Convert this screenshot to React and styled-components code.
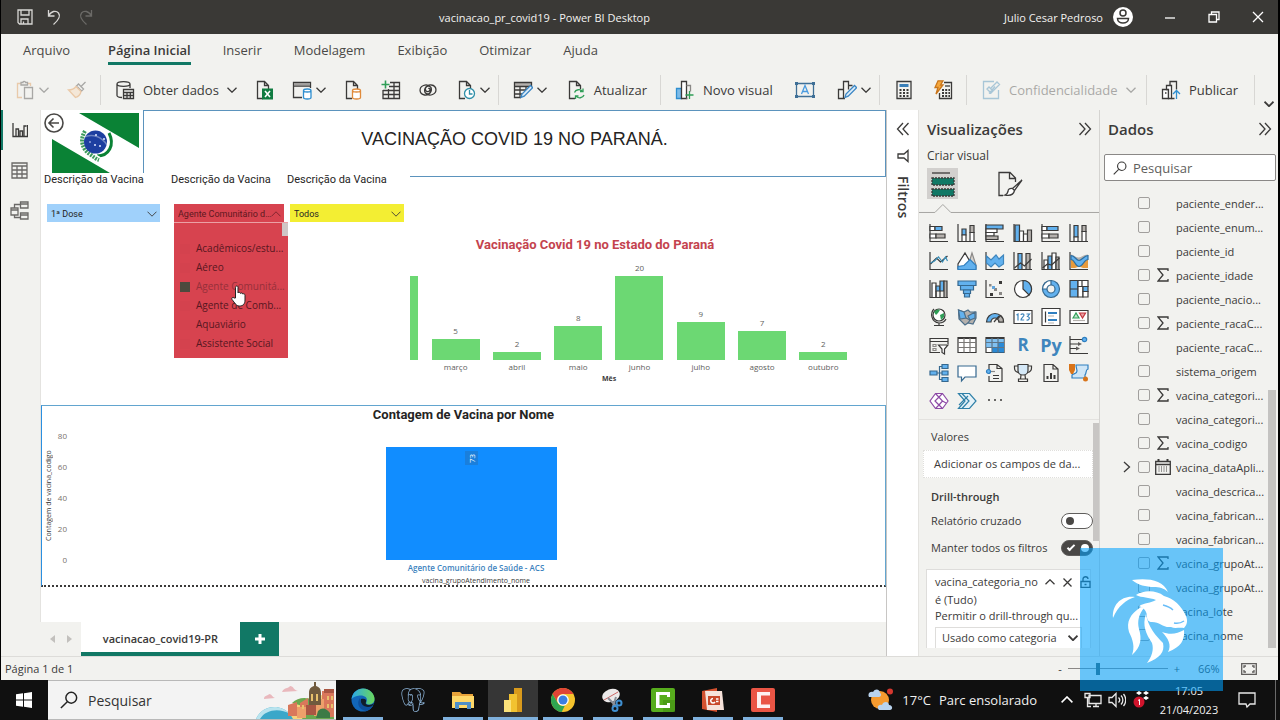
import React from "react";
import styled, { createGlobalStyle, css } from "styled-components";
import { SiPostgresql } from "react-icons/si";

const ui = `"Open Sans", "Noto Sans", sans-serif`;
const din = `Roboto, "Liberation Sans", sans-serif`;
const ink = "#3b3a39";
const green = "#117865";
const blue = "#62b1ee";
const grey = "#b5b1ad";
const pane = "#f2f2ef";

const GlobalStyle = createGlobalStyle`
  *, *::before, *::after { box-sizing: border-box; }
  body { margin: 0; font-family: ${ui}; color: ${ink}; background: #000; }
  button, input, select { font: inherit; color: inherit; }
  button { border: 0; padding: 0; background: none; }
  svg { display: block; flex: none; }
`;

const Shell = styled.div`
  position: relative;
  display: flex;
  flex-direction: column;
  height: 100vh;
  overflow: hidden;
`;

const Window = styled.div`
  flex: 1;
  min-height: 0;
  display: flex;
  flex-direction: column;
  border-left: 1px solid #000;
  border-right: 2px solid #000;
  background: ${pane};
`;

/* ---------- title bar ---------- */
const TitleBar = styled.header`
  height: 34px;
  flex: none;
  display: flex;
  align-items: center;
  background: #3a3936;
  color: #f3f2f1;
  font-size: 11px;
`;
const QuickAccess = styled.div`
  width: 96px;
  padding-left: 15px;
  display: flex;
  gap: 12px;
`;
const WindowTitle = styled.div`
  flex: 1;
  text-align: center;
`;
const Account = styled.div`
  width: 286px;
  padding-right: 6px;
  display: flex;
  align-items: center;
  justify-content: flex-end;
`;
const AccountButton = styled.button`
  display: flex;
  align-items: center;
  gap: 10px;
  margin-right: 15px;
  white-space: nowrap;
`;
const WindowButton = styled.button`
  width: 44px;
  display: flex;
  justify-content: center;
  &:last-child { width: 28px; margin-left: 8px; }
`;

/* ---------- ribbon ---------- */
const MenuTabs = styled.nav`
  height: 36px;
  flex: none;
  display: flex;
  align-items: flex-start;
  gap: 32px;
  padding: 4px 22px 0;
  font-size: 13px;
`;
const MenuTab = styled.button`
  height: 27px;
  line-height: 20px;
  display: block;
  border-bottom: 3px solid transparent;
  color: #4a4947;
  &:first-child { margin-right: 6px; }
  ${(p) => p.$active && css`
    font-weight: 600;
    color: ${ink};
    border-color: ${green};
  `}
`;
const Ribbon = styled.div`
  height: 40px;
  flex: none;
  display: flex;
  align-items: center;
  font-size: 13px;
`;
const RibbonGroup = styled.div`
  width: ${(p) => p.$w}px;
  height: 30px;
  padding: 0 ${(p) => p.$end || 13}px 0 14px;
  display: flex;
  align-items: center;
  justify-content: space-between;
  border-right: 1px solid #d8d7d4;
`;
const Tool = styled.button`
  display: flex;
  align-items: center;
  gap: ${(p) => (p.$label ? 8 : 4)}px;
  white-space: nowrap;
  opacity: ${(p) => (p.disabled ? 0.4 : 1)};
`;
const Expand = styled.button`
  align-self: flex-end;
  margin: 0 4px 3px auto;
`;

/* ---------- workspace ---------- */
const Workspace = styled.main`
  flex: 1;
  min-height: 0;
  display: flex;
`;
const ReportSide = styled.section`
  flex: 1;
  min-width: 0;
  display: flex;
  flex-direction: column;
`;
const ReportRow = styled.div`
  flex: 1;
  min-height: 0;
  display: flex;
`;
const Rail = styled.nav`
  width: 40px;
  display: flex;
  flex-direction: column;
  border-right: 1px solid #e4e3e0;
`;
const RailButton = styled.button`
  height: 40px;
  padding-right: 4px;
  display: flex;
  align-items: center;
  justify-content: center;
  border-left: 2px solid ${(p) => (p.$active ? green : "transparent")};
`;
const Report = styled.div`
  flex: 1;
  min-width: 0;
  display: flex;
  flex-direction: column;
  background: #fff;
`;
const ReportHeader = styled.div`
  height: 67px;
  flex: none;
  display: flex;
`;
const FlagCell = styled.div`
  position: relative;
  width: 102px;
  padding: 3px 0 0 11px;
`;
const BackButton = styled.button`
  position: absolute;
  left: 3px;
  top: 3px;
`;
const ReportTitle = styled.h1`
  flex: 1;
  margin: 0;
  padding-top: 16px;
  border: 1px solid #5b93bd;
  text-align: center;
  font: 400 18px/24px "Liberation Sans", Arial, sans-serif;
  color: #252423;
`;
const ReportMiddle = styled.div`
  height: 228px;
  flex: none;
  display: flex;
`;
const Slicers = styled.div`
  position: relative;
  width: 369px;
  margin-top: -4px;
  padding-left: 3px;
  display: grid;
  grid-template-columns: 127px 116px 123px;
  background: #fff;
`;
const Slicer = styled.div`
  font-family: ${din};
  font-size: 11px;
  color: #252423;
`;
const SlicerLabel = styled.label`
  display: block;
  line-height: 14px;
  margin-bottom: 17px;
`;
const SlicerBox = styled.div`
  position: relative;
  height: 18px;
  margin: 0 ${(p) => p.$gap}px 0 3px;
  background: ${(p) => p.$bg};
  > svg { position: absolute; right: 3px; top: 7px; pointer-events: none; }
`;
const SlicerSelect = styled.select`
  appearance: none;
  width: 100%;
  height: 18px;
  border: 0;
  padding: 2px 12px 0 4px;
  background: none;
  font: 9px ${din};
  color: ${(p) => p.$color || "#252423"};
  text-overflow: ellipsis;
`;
const SlicerMenu = styled.div`
  position: absolute;
  left: 0;
  top: 18px;
  width: 114px;
  padding: 16px 0 5px 6px;
  background: #d7434f;
  border-top: 1px solid #eba0a5;
  font: 10px/19px ${ui};
  color: #58171f;
  z-index: 2;
  &::after {
    content: "";
    position: absolute;
    right: 0;
    top: 0;
    width: 6px;
    height: 13px;
    background: #cfc6c6;
  }
`;
const SlicerOption = styled.label`
  height: 19px;
  display: flex;
  align-items: center;
  gap: 6px;
  white-space: nowrap;
  color: ${(p) => (p.$on ? "#96303a" : "inherit")};
`;
const SlicerCheck = styled.input`
  appearance: none;
  width: 10px;
  height: 10px;
  margin: 0;
  flex: none;
  background: #d4424e;
  &:checked { background: #4c4a3e; }
`;
const Pointer = styled.div`
  position: absolute;
  left: 57px;
  top: 81px;
  z-index: 3;
`;

/* ---------- column chart ---------- */
const ColumnChart = styled.figure`
  flex: 1;
  margin: 0;
  padding-top: 58px;
  font-size: 8px;
  color: #605e5c;
`;
const ChartTitle = styled.figcaption`
  font: 700 13px/${(p) => p.$line}px ${din};
  color: ${(p) => p.$color};
  text-align: center;
  padding-right: ${(p) => p.$shift || 0}px;
`;
const Columns = styled.div`
  height: 119px;
  padding-right: 32px;
  display: flex;
  align-items: flex-end;
`;
const ClippedColumn = styled.div`
  width: 8px;
  height: 84px;
  margin: 0 7px 14px 0;
  background: #6cd873;
`;
const ColumnCell = styled.div`
  flex: 1;
  display: flex;
  flex-direction: column;
  align-items: center;
  line-height: 14px;
`;
const ColumnValue = styled.span`
  line-height: 16px;
`;
const Column = styled.div`
  width: 48px;
  background: #6cd873;
`;
const AxisName = styled.div`
  text-align: center;
  font-weight: ${(p) => (p.$bold ? 700 : 400)};
  font-size: 7px;
  line-height: 10px;
  padding-right: ${(p) => p.$shift || 0}px;
  color: #3b3a39;
`;

/* ---------- bottom chart ---------- */
const BottomChart = styled.figure`
  height: 182px;
  flex: none;
  margin: 0;
  border: 1px solid #62a5cf;
  border-left: 1px solid #2a8fe0;
  border-bottom: 2px dotted #3b3a39;
`;
const Plot = styled.div`
  display: flex;
`;
const YName = styled.div`
  width: 14px;
  height: 144px;
  writing-mode: vertical-rl;
  transform: rotate(180deg);
  text-align: center;
  font-size: 7px;
  line-height: 14px;
`;
const YTicks = styled.div`
  width: 11px;
  height: 140px;
  margin-top: 4px;
  display: flex;
  flex-direction: column;
  justify-content: space-between;
  text-align: right;
  font: 8px/16px ${ui};
  color: #77716d;
`;
const PlotBody = styled.div`
  flex: 1;
  text-align: center;
`;
const PlotArea = styled.div`
  height: 136px;
  padding-right: 9px;
  display: flex;
  justify-content: center;
  align-items: flex-end;
`;
const BigBar = styled.div`
  width: 171px;
  height: 113px;
  padding-top: 4px;
  display: flex;
  justify-content: center;
  align-items: flex-start;
  background: #118dff;
`;
const BarValue = styled.span`
  height: 14px;
  writing-mode: vertical-rl;
  transform: rotate(180deg);
  font-size: 8px;
  line-height: 13px;
  text-align: center;
  background: #1a7fdc;
  color: #fff;
`;
const CategoryName = styled.div`
  font: 600 8px/16px ${ui};
  color: #3c82be;
`;

/* ---------- page tabs + status ---------- */
const PageTabs = styled.div`
  height: 34px;
  flex: none;
  padding-left: 40px;
  display: flex;
`;
const PageArrows = styled.div`
  width: 40px;
  display: flex;
  align-items: center;
  justify-content: space-evenly;
`;
const PageTab = styled.button`
  width: 159px;
  padding-top: 3px;
  background: #fff;
  border-bottom: 4px solid ${green};
  font-size: 11px;
  font-weight: 600;
`;
const AddPage = styled.button`
  width: 39px;
  display: flex;
  align-items: center;
  justify-content: center;
  background: ${green};
`;
const StatusBar = styled.footer`
  height: 24px;
  flex: none;
  padding: 0 21px 0 4px;
  display: flex;
  align-items: center;
  border-top: 1px solid #dddcd9;
  font-size: 11px;
`;
const Zoom = styled.div`
  margin-left: auto;
  display: flex;
  align-items: center;
  gap: 6px;
  b { width: 26px; font-weight: 400; margin: 0 11px 0 12px; }
`;
const ZoomRange = styled.input`
  appearance: none;
  width: 100px;
  height: 12px;
  margin: 0;
  background: linear-gradient(#8a8886, #8a8886) center / 100% 1px no-repeat;
  &::-webkit-slider-thumb {
    appearance: none;
    width: 4px;
    height: 12px;
    background: #3c5a60;
  }
`;

/* ---------- filters pane ---------- */
const FiltersPane = styled.aside`
  width: 33px;
  display: flex;
  flex-direction: column;
  align-items: center;
  gap: 13px;
  padding: 12px 0 0;
  background: #fff;
  border-left: 1px solid #c8c6c4;
  border-right: 1px solid #e4e3e0;
`;
const FiltersTitle = styled.h2`
  margin: 0;
  writing-mode: vertical-rl;
  font: 600 14px/18px ${ui};
`;

/* ---------- visualisations pane ---------- */
const VizPane = styled.aside`
  width: 181px;
  display: flex;
  flex-direction: column;
  border-right: 1px solid #d5d4d1;
`;
const PaneHeader = styled.div`
  height: 38px;
  flex: none;
  padding: 0 ${(p) => p.$pad}px 0 8px;
  display: flex;
  align-items: center;
  justify-content: space-between;
  h2 { margin: 0; font: 600 15px/20px ${ui}; }
`;
const BuildLabel = styled.div`
  padding-left: 8px;
  font-size: 12px;
  line-height: 16px;
`;
const ModeButtons = styled.div`
  padding: 4px 8px 0;
  display: flex;
  gap: 36px;
`;
const ModeButton = styled.button`
  width: 31px;
  height: 31px;
  display: flex;
  align-items: center;
  justify-content: center;
  background: ${(p) => (p.$active ? "#d2d0ce" : "none")};
`;
const Notch = styled.svg`
  width: 100%;
  height: 16px;
`;
const VizGrid = styled.div`
  padding: 4px 0 4px 6px;
  display: grid;
  grid-template-columns: repeat(6, 28px);
  grid-auto-rows: 28px;
`;
const VizButton = styled.button`
  display: flex;
  align-items: center;
  justify-content: center;
`;
const Wells = styled.div`
  position: relative;
  flex: 1;
  min-height: 0;
  margin-bottom: 8px;
  padding: 7px 6px 0 4px;
  overflow: hidden;
  border-top: 1px solid #e3e2df;
  font-size: 11px;
  white-space: nowrap;
  &::after {
    content: "";
    position: absolute;
    right: 0;
    top: 3px;
    width: 6px;
    height: 118px;
    background: #c8c6c4;
  }
`;
const WellName = styled.div`
  padding-left: 8px;
  line-height: 20px;
  font-weight: ${(p) => (p.$bold ? 600 : 400)};
`;
const DropField = styled.div`
  height: 28px;
  margin: 3px 0 9px;
  padding-left: 10px;
  line-height: 26px;
  background: #fff;
  border: 1px dotted #e0dfdc;
`;
const ToggleRow = styled.label`
  height: 27px;
  padding-left: 8px;
  display: flex;
  align-items: center;
  justify-content: space-between;
`;
const Toggle = styled.input`
  appearance: none;
  position: relative;
  width: 32px;
  height: 16px;
  margin: 0;
  flex: none;
  border: 1px solid #605e5c;
  border-radius: 8px;
  background: #fff;
  &::before {
    content: "";
    position: absolute;
    left: 4px;
    top: 3px;
    width: 8px;
    height: 8px;
    border-radius: 50%;
    background: #4a4846;
  }
  &:checked { background: #4a4846; }
  &:checked::before { left: 19px; background: #fff; }
  &:checked::after {
    content: "";
    position: absolute;
    left: 7px;
    top: 2px;
    width: 4px;
    height: 8px;
    border: solid #fff;
    border-width: 0 2px 2px 0;
    rotate: 45deg;
  }
`;
const FilterCard = styled.div`
  height: 96px;
  margin: 8px 2px 0 3px;
  padding: 2px 8px;
  border: 1px solid #dedddb;
  background: #fff;
  line-height: 16px;
`;
const CardHead = styled.div`
  height: 20px;
  display: flex;
  align-items: center;
  gap: 8px;
  > span { width: 102px; }
`;
const CardSelect = styled.div`
  position: relative;
  margin-top: 3px;
  svg { position: absolute; right: 4px; top: 8px; pointer-events: none; }
  select {
    appearance: none;
    width: 100%;
    height: 26px;
    padding: 0 16px 4px 6px;
    border: 1px solid #dedddb;
    background: #fff;
  }
`;

/* ---------- data pane ---------- */
const DataPane = styled.aside`
  position: relative;
  width: 178px;
  display: flex;
  flex-direction: column;
  &::after {
    content: "";
    position: absolute;
    right: 2px;
    bottom: 8px;
    width: 8px;
    height: 258px;
    background: #c4c3c1;
  }
`;
const SearchBox = styled.label`
  height: 27px;
  flex: none;
  margin: 6px 2px 10px 4px;
  padding-left: 8px;
  display: flex;
  align-items: center;
  gap: 6px;
  background: #fff;
  border: 1px solid #8a8886;
  border-radius: 2px;
  input {
    min-width: 0;
    flex: 1;
    border: 0;
    padding: 0;
    background: none;
    font-size: 13px;
    &::placeholder { color: #605e5c; opacity: 1; }
  }
`;
const FieldList = styled.div`
  flex: 1;
  min-height: 0;
  margin-bottom: 8px;
  overflow: hidden;
`;
const Field = styled.label`
  height: 24px;
  display: grid;
  grid-template-columns: 14px 12px 18px 1fr;
  column-gap: 4px;
  padding-left: 20px;
  align-items: center;
  font-size: 11px;
  white-space: nowrap;
  > svg { justify-self: center; }
`;
const FieldCheck = styled.input`
  appearance: none;
  width: 12px;
  height: 12px;
  margin: 0;
  border: 1px solid #a19f9d;
  border-radius: 2px;
`;

/* ---------- taskbar ---------- */
const Taskbar = styled.footer`
  height: 40px;
  flex: none;
  display: flex;
  background: #101010;
  color: #f0f0f0;
`;
const StartButton = styled.button`
  width: 48px;
  display: flex;
  align-items: center;
  justify-content: center;
`;
const TaskSearch = styled.label`
  width: 288px;
  padding-left: 12px;
  display: flex;
  align-items: center;
  gap: 10px;
  background: #f3f3f3;
  border-top: 1px solid #b8b8b8;
  border-bottom: 1px solid #b8b8b8;
  overflow: hidden;
  input {
    width: 158px;
    border: 0;
    padding: 0;
    background: none;
    font-size: 14px;
    &::placeholder { color: #333; opacity: 1; }
  }
`;
const TaskApps = styled.div`
  padding-left: 2px;
  display: flex;
`;
const TaskApp = styled.button`
  width: 50px;
  position: relative;
  display: flex;
  align-items: center;
  justify-content: center;
  background: ${(p) => (p.$active ? "#363636" : "none")};
  &::after {
    content: "";
    position: absolute;
    bottom: 0;
    left: ${(p) => (p.$active ? 0 : 5)}px;
    right: ${(p) => (p.$active ? 0 : 5)}px;
    height: 3px;
    background: ${(p) => (p.$idle ? "none" : "#7fb0dc")};
  }
`;
const Tray = styled.div`
  margin-left: auto;
  padding-right: 4px;
  display: flex;
  align-items: center;
  gap: 6px;
`;
const Weather = styled.button`
  display: flex;
  align-items: center;
  gap: 8px;
  margin-right: 18px;
  font-size: 13px;
  white-space: nowrap;
`;
const HiddenIcons = styled.button`
  margin-right: 5px;
`;
const Clock = styled.div`
  width: 62px;
  margin-right: 12px;
  text-align: center;
  font-size: 11px;
  line-height: 19px;
`;
const Peek = styled.div`
  height: 40px;
  margin-left: 13px;
  border-left: 1px solid #6a6a6a;
`;
const Watermark = styled.div`
  position: absolute;
  right: 57px;
  bottom: 29px;
  width: 143px;
  height: 143px;
  background: rgba(0, 162, 255, 0.57);
  pointer-events: none;
`;

/* ---------- drawings ---------- */
const Icon = ({ w = 20, h, box, children, stroke = ink, sw = 1.3 }) => (
  <svg width={w} height={h || w} viewBox={box || `0 0 ${w} ${h || w}`} fill="none" stroke={stroke} strokeWidth={sw} aria-hidden="true">
    {children}
  </svg>
);
const Chevron = ({ up, w = 10, color = ink, sw = 1.3 }) => (
  <svg width={w} height={w * 0.6} viewBox="0 0 10 6" fill="none" stroke={color} strokeWidth={sw} aria-hidden="true">
    <path d={up ? "M.5 5.3 5 .8l4.500 4.500" : "M.5.7 5 5.200 9.500.7"} />
  </svg>
);
const Double = ({ left }) => (
  <Icon w={14}><path d={left ? "M7 1 1.500 7 7 13M12.500 1 7 7l5.500 6" : "M1.500 1 7 7l-5.500 6M7 1l5.500 6L7 13"} /></Icon>
);
const Page = "M9 18.500H3.500v-17h7l4 4V9M10.500 1.500v4h4";
const Pencil = () => (
  <g stroke="#3a86c4" fill="#dcecf8"><path d="m8 17.500 1-3.500 8.500-8.500 2.200 2.200-8.500 8.500z" /></g>
);
const ribbon = {
  paste: <Icon><path stroke="#dd8f45" d="M7 17.500H2.500v-14H6M12 3.500h3.500V6" /><path d="M6 5V2.500h2c0-1.600 2.500-1.600 2.500 0h2V5zM9.500 7.500h8v11h-8z" /></Icon>,
  brush: <Icon><path d="m18.500 2-5 5M9.500 6l5 5 2-2-5-5z" /><path stroke="#e08b3b" fill="#f7d9b4" d="M9 6.500C7 9 4.500 10 1.500 10l7 7.500c3-1 5-3.500 5.500-6z" /></Icon>,
  db: <Icon><path d="M7 17.500c-3 0-5-1-5-2V4c0-1.300 3-2.300 6.500-2.300S15 2.700 15 4v4M2 4c0 1.300 3 2.300 6.500 2.300S15 5.300 15 4" /><path d="M8.500 9.500h10v9h-10zM8.500 12.500h10M8.500 15.500h10M12 12.500v6M15.300 12.500v6" /></Icon>,
  excel: <Icon><path d={Page} /><rect x="8" y="8.500" width="11" height="11" fill="#107c41" stroke="none" /><path stroke="#fff" strokeWidth="1.600" d="m11 11 5 6M16 11l-5 6" /></Icon>,
  dataset: <Icon><path d="M10 17.500H1.500v-15h17V8M1.500 6h17" /><path stroke="none" fill="#a19f9d" d="M2 3h16v2.500H2z" /><path stroke="#2f8fd0" fill="#fff" d="M11.500 10.500v7c0 2 7.500 2 7.500 0v-7c0-2-7.500-2-7.500 0s7.500 2 7.500 0" /></Icon>,
  sql: <Icon><path d={Page} /><path stroke="#e08b3b" fill="#fff" d="M9.500 10.500v7c0 2 8 2 8 0v-7c0-2-8-2-8 0s8 2 8 0" /></Icon>,
  enter: <Icon><path d="M9 2.500h9.500v16H2V10M2 10.500h16.500M8 6.500h10.500M2 14.500h16.500M7.500 9v9.500M13 2.500v16" /><path stroke="#2f9e57" strokeWidth="1.600" d="M4.500.5v8M.5 4.500h8" /></Icon>,
  verse: <Icon><path d="M13 7.500c-2.500-3-6.500-.5-5.500 2.500.8 2.500 4.500 2 4.500-.5 0-1-1-1.500-1.800-1M7 12.500c2.500 3 6.500.5 5.500-2.500M13 7.500c1.500 4-2 8.500-6.500 7.500C1 14 .5 7.500 5.500 5.500 8 4.500 11 5 13 7.500zM7 12.500C5.500 8.500 9 4 13.500 5c5.500 1 6 7.500 1 9.500-2.500 1-5.500.5-7.500-2" /></Icon>,
  recent: <Icon><path d={Page} /><circle cx="13.500" cy="13.500" r="5" stroke="#2f8fa8" fill="#fff" /><path stroke="#2f8fa8" d="M13.500 10v4h3" /></Icon>,
  transform: <Icon><path stroke="none" fill="#b5b1ad" d="M1.500 2.500h17V6h-17z" /><path d="M8 17.500H1.500v-15h17V7M1.500 6.500h17M1.500 10h12M1.500 14H9M7 6.500v11M13 6.500V10" /><Pencil /></Icon>,
  refresh: <Icon><path d={Page} /><path stroke="#2f9e57" d="M8.500 12.500c1-3 6-4 8-1M17 8.500v3h-3M18 15c-1 3-6 4-8 1M9.500 19v-3h3" /></Icon>,
  visual: <Icon><path stroke="#2f8fd0" fill="#7dbbe8" d="M1.500 8.500h5v10h-5z" /><path fill="#fff" d="M6.500 1.500h5v17h-5z" /><path stroke="#8a8886" d="M11.500 5.500h4v6M11.500 18.500h1" /><path stroke="#2f9e57" d="M14.500 11v8M10.500 15h8" /></Icon>,
  textbox: <Icon><path stroke="#3f6f96" d="M1.500 3.500h17v13h-17z" /><path stroke="none" fill="#3f6f96" d="M0 2h3v3H0zM17 2h3v3h-3zM0 15h3v3H0zM17 15h3v3h-3z" /><path stroke="#4a9be0" d="m6.500 14 3.500-8.500 3.500 8.500M7.800 11.500h4.500" /></Icon>,
  edit: <Icon><path d="M8 18.500H1.500v-9h5v9M6.500 10V1.500h5v8M11.500 5.500h4" /><Pencil /></Icon>,
  calc: <Icon><path d="M3 1.500h14v17H3z" /><path stroke="none" fill="#3a7fb8" d="M5.500 4h9v3h-9z" /><path strokeDasharray="2 1.500" strokeWidth="2" d="M5.500 10h9.500M5.500 13h9.500M5.500 16h9.500" /></Icon>,
  quick: <Icon><path d="M11 2.500h7.500v16h-12V13" /><path strokeDasharray="2 1.200" strokeWidth="2" d="M9 10h8M9 13h8M9 16h8" /><path d="M12 6h5" /><path stroke="#c9761c" fill="#f6a83c" d="M5 .8h5L7.500 5H10l-7 9 2-6.500H2z" /></Icon>,
  sens: <Icon><path stroke="#3b86b5" d="M13 18.500H2.500v-17H13M17.500 10v8.500H13" /><path stroke="#3b86b5" d="m6 9 4 4 2-2-4-4zM10 8l6-6 2.500 2.500-6 6M8 13.500l6-7" /></Icon>,
  publish: <Icon><path fill="#fff" d="M1.500 9.500h6v9h-6z" /><path fill="#fff" d="M7.500 18.500V9.500h-2v-4h5v13z" /><path d="M9 5.500v-4h6.500v8M10.500 18.500h3M4 13h1.500" /><path stroke="#2f8fd0" d="M15.500 19v-8M12 14l3.500-3.500L19 14" /></Icon>,
};

const axis = <path d="M1 1v17.500h18" />;
const B = ({ d, f = blue }) => <path d={d} fill={f} />;
const viz = [
  <>{axis}<B d="M1 3.500h5v4H1z" f="#fff" /><B d="M6 3.500h7v4H6z" /><B d="M1 11h6v4H1z" f="#fff" /><B d="M7 11h9v4H7z" f={grey} /></>,
  <>{axis}<B d="M5 6h4v6H5z" /><B d="M5 12h4v6.500H5z" f="#fff" /><B d="M13 2.500h4v7h-4z" f={grey} /><B d="M13 9.500h4v9h-4z" f="#fff" /></>,
  <>{axis}<B d="M1 2h17v4H1z" /><B d="M1 6h11v3.500H1z" f="#fff" /><B d="M1 9.500h8V13H1z" f="#fff" /><B d="M1 13h12v3.500H1z" f={grey} /></>,
  <>{axis}<B d="M2 2h4.500v16.500H2z" /><B d="M6.500 8h4v10.500h-4z" f="#fff" /><B d="M10.500 11h4v7.500h-4z" f="#fff" /><B d="M14.500 7h4v11.500h-4z" f={grey} /></>,
  <>{axis}<B d="M1 3.500h5v4H1z" f="#fff" /><B d="M6 3.500h11v4H6z" /><B d="M1 11h7v4H1z" f="#fff" /><B d="M8 11h9v4H8z" f={grey} /></>,
  <>{axis}<B d="M5 2.500h4V14H5z" /><B d="M5 14h4v4.500H5z" f="#fff" /><B d="M13 2.500h4v6h-4z" f={grey} /><B d="M13 8.500h4v10h-4z" f="#fff" /></>,
  <>{axis}<path d="m1.500 13 6-6 4 4 7-6" /><path stroke="#3a8fb8" d="m1.500 12 4-2 4-4 4 5 3-5 2 4" /></>,
  <><path stroke="#8a8886" fill="#d4d1cd" d="M10 18 15 2l4 12v4z" /><B d="M1 18v-5L8 2l7 12v4z" f="#fff" /><path stroke="#2f7fc0" fill={blue} d="M1 18.500v-3l6-1 6-6 6 6v4z" /></>,
  <>{axis}<path d="M1.500 5 6 9l5-5 3 4 4.500-4v9L14 16l-4-4-4 4-4.500-4z" stroke="#3f86bd" fill={blue} /></>,
  <>{axis}<B d="M5 2.500h4v16H5z" /><B d="M13 2.500h4v16h-4z" f={grey} /><path d="m1.500 17 6-5 4 3 7-7" /></>,
  <>{axis}<B d="M3 9h4v9.500H3z" f="#fff" /><B d="M7 5h4v13.500H7z" /><B d="M11 2h4v16.500h-4z" f="#fff" /><B d="M15 6h3v12.500h-3z" f={grey} /><path d="m1.500 17 5-4 4 1 8-7" /></>,
  <>{axis}<path stroke="none" fill={grey} d="M2 3.500c3 0 4 3 7.500 3S14 3.500 19 3.500V8l-9 4-8-4z" /><path stroke="none" fill="#e79a3c" d="M2 9h17v8h-5l-4-1.500L6 17H2z" /><path stroke="#2a6ea3" fill={blue} d="M2 4.500c4 0 5 5 8 5s5-5 9-5v4c-4 0-5 7-9 7s-4-7-8-7z" /></>,
  <>{axis}<B d="M3 4h4v14.500H3z" f="#fff" /><B d="M7 7h4v5H7z" /><B d="M11 2h4v10h-4z" /><B d="M15 2h3v16.500h-3z" f={grey} /><path d="M7 12v6.500M11 12v6.500" /></>,
  <g stroke="#35688f"><B d="M1 2h18v4.500H1z" /><B d="M3.500 6.500h13V11h-13z" /><B d="M6.500 11h7v3.500h-7z" /><B d="M7.500 14.500h5V18h-5z" /></g>,
  <>{axis}<g stroke="none"><path fill={ink} d="M14 2h3v3h-3zM5 14h3v3H5z" /><path fill="#8a8886" d="M9 9h3v3H9zM4 5h2.500v2.500H4zM14 13h3v3h-3z" /><path fill="#62a5dc" d="M7 7h3v3H7z" /></g></>,
  <><circle cx="10" cy="10" r="8.500" fill="#fff" /><B d="M10 10V1.500A8.500 8.500 0 0 1 16 16z" /></>,
  <g stroke="#35688f"><circle cx="10" cy="10" r="8.500" fill={blue} /><path fill="#fff" d="M1.500 10A8.500 8.500 0 0 1 10 1.500V10z" /><circle cx="10" cy="10" r="4" fill={pane} /></g>,
  <><B d="M1 1.500h8V18H1z" /><B d="M9 1.500h10v6H9z" f="#fff" /><B d="M9 7.500h5V18H9z" f="#fff" /><B d="M14 7.500h5v5h-5z" /><B d="M14 12.500h5V18h-5z" f="#fff" /><path d="M1 10h8M13 1.500v6" /></>,
  <><circle cx="10" cy="8" r="6" fill="#fff" /><path stroke="none" fill="#2f9e57" d="M5 5c2-3 5-3 6-2l-2 3-2 2zM11 8l4-2v4l-3 3z" /><path d="M5 2C1 6 2 15 10 16c4 0 6-2 7-4M10 16v2.500M5 18.500h10" /></>,
  <g stroke="#4d6f8a"><B d="M1.500 3 7 5l4-2 2 2h6v6l-3 6-5-1-3 2-6-6z" f={grey} /><B d="M1.500 3 7 5l2 6-6 1zM11 9l7-4v6l-5 2z" /><path d="m9 11 4 2-2 3" /></g>,
  <><B d="M1.500 15a8.500 8.500 0 0 1 17 0H14a4 4 0 0 0-8 0z" /><path fill={grey} d="M18.500 15a8 8 0 0 0-3-6.500L12.500 12c1 .8 1.500 2 1.500 3z" /><path d="m9 15 5-6" /></>,
  <><B d="M1 3.500h18v13H1z" f="#fff" /><path stroke="#3f86bd" d="m3.500 8 1.500-1v6.500M8 8c0-1.500 3-1.500 3 0s-3 3-3 5h3.200M13.500 7h3l-2 2.500c3 .5 2 4-1 3.500" /></>,
  <><B d="M1 1.500h18v17H1z" f="#fff" /><path d="M4.500 4.500v11" /><path stroke="#2f7fc0" strokeWidth="2" d="M7 6h9M7 13h9" /><path stroke={grey} d="M7 9h6M7 16h6" /></>,
  <><B d="M1 3.500h18v13H1z" f="#fff" /><path stroke="#2f9e57" fill="#bfe3cc" d="m4 11 3-5 3 5z" /><path stroke="#c4373f" fill="#e9a0a4" d="m10.500 6 3 5 3-5z" /><path stroke={grey} d="M4 13.500h12" /></>,
  <><path d="M11 17.500H1v-14h18V9M1 6.500h18" /><path stroke="#8a8886" d="M4 9.500h3v2H4zM4 13.500h3v2H4z" /><B d="M9.500 10h9.500l-3.500 4v5l-2.500-1.500V14z" f="#fff" /></>,
  <><B d="M1 2.500h18v15H1z" f="#fff" /><path strokeWidth="2" d="M1 3h18" /><path stroke="#7a7876" d="M1 7.500h18M1 12.500h18M7 3v14.500M13 3v14.500" /></>,
  <><B d="M1 2.500h18v15H1z" f="#fff" /><path stroke="none" fill="#2a8ad6" d="M13 7.500h6v10H7v-5h6z" /><path stroke="none" fill={blue} d="M1 3h18v4.500h-6v5H1z" opacity=".8" /><path strokeWidth="2" d="M1 3h18" /><path stroke="#5d7588" d="M1 7.500h18M1 12.500h18M7 3v14.500M13 3v14.500" /></>,
  null,
  null,
  <>{axis}<path d="M1 4.500h12M1 9h9M1 13.500h6" /><circle cx="15.500" cy="4.500" r="2.200" stroke="#2f7fc0" fill={blue} /><path stroke="none" fill="#605e5c" d="M9 7l4 2-4 2zM7 11.500l4 2-4 2z" /></>,
  <g stroke="#35688f"><B d="M1 8h7v4H1z" /><B d="M13 1.500h6v4h-6zM13 8h6v4h-6zM13 14.500h6v4h-6z" /><path d="M8 10h5M10.500 10V3.500H13M10.500 10v6.500H13" /></g>,
  <path stroke="#35688f" fill="#fff" d="M1 3h18v11H8l-3.500 4v-4H1z" />,
  <><path d="M4 9V1.500h8l5 4v13H4V13M12 1.500v4h5M8 12.500h6M8 15.500h6" /><circle cx="3.500" cy="8.500" r="2" stroke="#2f7fc0" fill={blue} /><path d="M6 8.500h4" stroke="#8a8886" /></>,
  <><B d="M5 1.500h10v6c0 6-10 6-10 0z" f="#d5e9f8" /><path d="M5 3H1.500v2C1.500 8 3 9 5.500 9.500M15 3h3.500v2c0 3-1.500 4-4 4.500M8 12l-.5 4M12 12l.5 4M5.500 18.500v-2.500h9v2.500z" /></>,
  <><path d="M3 1.500h9l5 4.500v12.500H3zM12 1.500V6h5" /><path strokeWidth="2" d="M6.500 16v-3M10 16v-6M13.500 16v-4" /></>,
  <><path stroke="#2f7fc0" fill="#cfe6f7" d="M7 2h12v4c-3 1-1 4-3 6v3H3v-3c2-2 5-1 5-4 0-2-1-3-1-6z" /><path stroke="none" fill="#d8741a" d="M0 1h6v6l-2 4H2L0 7zM14 16a2.500 2.500 0 1 0 5 0 2.500 2.500 0 1 0-5 0" /></>,
  <g stroke="#8d4aa6"><path fill="#fff" d="M6.500 2.500h7L19 10l-5.500 7.500h-7L1 10z" /><path d="m6.500 2.500 7 7.500-3.500 4-4-4 7.500-7.500M10 14l3.500 3.500M10 14l-3.500 3.500M13.500 10 17 12" /></g>,
  <g stroke="#2f80a8"><path fill="#e6f2f8" d="M1.500 2.500h11L19 10l-6.500 7.500h-11L8 10z" /><path d="m5 2.500 7 7.500-7 7.500M2 14l9-9" /></g>,
];
const VizText = styled.span`
  font: 700 ${(p) => p.$size}px/20px ${ui};
  color: #3f86bd;
`;
const scripts = { 27: ["R", 17], 28: ["Py", 18] };

const menu = ["Arquivo", "Página Inicial", "Inserir", "Modelagem", "Exibição", "Otimizar", "Ajuda"];
const options = ["Acadêmicos/estu...", "Aéreo", "Agente Comunitá...", "Agente de Comb...", "Aquaviário", "Assistente Social"];
const months = [["março", 5], ["abril", 2], ["maio", 8], ["junho", 20], ["julho", 9], ["agosto", 7], ["outubro", 2]];
const fields = [
  ["paciente_ender..."], ["paciente_enum..."], ["paciente_id"], ["paciente_idade", "sum"], ["paciente_nacio..."],
  ["paciente_racaC...", "sum"], ["paciente_racaC..."], ["sistema_origem"], ["vacina_categori...", "sum"],
  ["vacina_categori..."], ["vacina_codigo", "sum"], ["vacina_dataApli...", "date"], ["vacina_descrica..."],
  ["vacina_fabrican..."], ["vacina_fabrican..."], ["vacina_grupoAt...", "sum"], ["vacina_grupoAt..."],
  ["vacina_lote"], ["vacina_nome"],
];

const Sigma = () => <Icon w={12} h={14}><path d="M11 3V1H1l5 6-5 6h10v-2" /></Icon>;
const Calendar = () => (
  <Icon w={16}><path d="M.7 2.500h14.600v12.800H.7zM.7 5.500h14.600" /><path strokeWidth="2" d="M3.500 0v3M12.500 0v3" /><path strokeDasharray="1 1" strokeWidth="1" d="M4 7.500v6M6.500 7.500v6M9 7.500v6M11.500 7.500v6" /></Icon>
);
const Magnifier = ({ w, color }) => (
  <Icon w={w} box="0 0 16 16" stroke={color}><circle cx="10" cy="6" r="4.800" /><path d="M6.500 9.500.8 15.200" /></Icon>
);

function Flag() {
  return (
    <svg width="87" height="60" viewBox="0 0 87 60" aria-hidden="true">
      <path fill="#fff" d="M0 0h87v60H0z" />
      <path fill="#0a8235" d="M27 0h60v35zM0 26v34h58z" />
      <path fill="none" stroke="#0a8235" strokeWidth="3" d="M57 20c6 12 0 23-12 23" />
      <path fill="none" stroke="#fff" strokeWidth="7" d="M33 18c-5 8-4 18 6 24 3 2 5 4 8 5" />
      <path fill="none" stroke="#3c9a5c" strokeWidth="4" strokeDasharray="2 1" d="M33 18c-5 8-4 18 6 24 3 2 5 4 8 5" />
      <circle cx="43.500" cy="29" r="11.500" fill="#1d3fa0" />
      <path fill="none" stroke="#fff" strokeWidth="1.500" d="M32 24c9-4 18 0 23 8" opacity=".35" />
      <g fill="#dfe8ff"><circle cx="44" cy="22" r="1" /><circle cx="52" cy="26" r="1" /><circle cx="43" cy="32" r="1" /><circle cx="48" cy="33" r="1" /><circle cx="38" cy="29" r=".8" /></g>
    </svg>
  );
}

function City() {
  return (
    <svg width="78" height="38" viewBox="0 0 78 38" aria-hidden="true">
      <path fill="#e9b8bd" d="M8 18c0-4 4-3 5-5 3 0 3 3 6 4zM26 11c2-5 6-3 8-6 4 0 3 4 8 5z" />
      <path fill="#f6d37c" d="M28 38c4-14 20-22 50-26v26z" />
      <path fill="#6aa84f" d="M36 22c6-6 14-6 22-3l-4 8zM50 30h28v8H46z" />
      <path fill="#3aa7c9" d="M0 38c6-14 24-16 34-5l3 5z" />
      <path fill="#b8e3ee" d="M0 38c6-14 24-16 34-5-10-6-24-5-30 5z" />
      <path fill="#d9775b" d="M32 24l9-3v14h-9zM44 22l8-5v16h-8zM66 10h12v26H66z" />
      <path fill="#eda06a" d="M41 26h9v11h-9zM58 18h10v17H58z" />
      <path fill="#a95643" d="M68 8h10v4H68zM50 24h10v10H50z" />
      <path fill="#705a3e" d="M53 12c0-5 3-7 6-7s6 2 6 7v12H53zM58 1h2v5h-2z" />
      <path fill="#e8c16c" d="M55 13h2v7h-2zM60 13h2v7h-2zM71 15h2v4h-2zM75 15h2v4h-2zM71 23h2v4h-2zM75 23h2v4h-2zM46 24h2v4h-2z" />
      <path fill="#3c7a46" d="M62 30c4-4 8-3 12 2v5H60z" />
    </svg>
  );
}

const apps = [
  { name: "Edge", icon: (
    <svg width="24" height="24" viewBox="0 0 24 24"><defs><linearGradient id="eg" x1="0" x2="1"><stop offset="0" stopColor="#2aa7e8" /><stop offset="1" stopColor="#6bd85a" /></linearGradient></defs>
      <circle cx="12" cy="12" r="11.500" fill="#1266b8" /><path fill="url(#eg)" d="M.6 11C1.500 4 7 .5 12 .5 19 .5 23.500 6 23.500 11c0 4-3 5.500-6 5.500-2 0-3-1-2-2.500 2-5-3-7-7-6.500C5 8 2 9 .6 11z" /><path fill="#0d4f9c" d="M9 10c-4 5-1 12 6 13 3-1 5-2.500 7-5-6 2.500-13 0-13-8z" /><path fill="#101010" d="M15 14c-1 1.500 0 3 3 3 2 0 4-1 5-2-1 3-3 4-6 4-5 0-8-4-7-8 3-1 6 0 5 3z" opacity=".85" /></svg>) },
  { name: "PostgreSQL", idle: true, icon: <SiPostgresql size={24} color="#8db4d8" /> },
  { name: "Explorador", icon: (
    <svg width="22" height="20" viewBox="0 0 22 20"><path fill="#e8a33a" d="M0 2h8l2 2h11v4H0z" /><path fill="#ffd869" d="M0 6h22v12H0z" /><path fill="#4f8fc8" d="M3 19v-7h16v7h-4v-4H7v4z" /></svg>) },
  { name: "Power BI", active: true, icon: (
    <svg width="18" height="24" viewBox="0 0 18 24"><path fill="#d99a1c" d="M10 0h8v24h-8z" /><path fill="#f2c230" d="M5 6h8v18H5z" /><path fill="#fbe27a" d="M0 12h7v12H0z" /></svg>) },
  { name: "Chrome", icon: (
    <svg width="24" height="24" viewBox="0 0 24 24"><circle cx="12" cy="12" r="12" fill="#f5c32c" /><path fill="#e04335" d="M1.600 6A12 12 0 0 1 22.400 6H12a6 6 0 0 0-5.200 9z" /><path fill="#2fa450" d="M1.600 6 6.800 15A6 6 0 0 0 12 18h1.700l-3 6A12 12 0 0 1 1.600 6z" /><circle cx="12" cy="12" r="5.800" fill="#fff" /><circle cx="12" cy="12" r="4.500" fill="#3b7de0" /></svg>) },
  { name: "Captura", icon: (
    <svg width="26" height="24" viewBox="0 0 26 24"><ellipse cx="11" cy="7.500" rx="9" ry="6.500" fill="#eceaea" transform="rotate(-20 11 7.500)" /><path stroke="#c66" d="m4 12 14-8" /><path stroke="#8a9099" strokeWidth="2" d="m8 10 8 8M16 9l-3 9" /><g fill="none" stroke="#3f8fd0" strokeWidth="2"><circle cx="15" cy="20.500" r="2.500" /><circle cx="19" cy="15" r="2.500" /></g></svg>) },
  { name: "Camtasia", icon: (
    <svg width="24" height="24" viewBox="0 0 24 24"><rect width="24" height="24" rx="2" fill="#57ad1d" /><path fill="#3f8a12" d="M12 12h12v12H12z" opacity=".5" /><path fill="#fff" d="M5 4h14v5h-3V7H8.500v10H16v-2h3v5H5z" /></svg>) },
  { name: "PowerPoint", icon: (
    <svg width="24" height="24" viewBox="0 0 24 24"><path fill="#d3512f" d="m1 3 15-3v24L1 21z" /><path fill="#f6e2da" d="M4 3h17l2 19H6z" /><path fill="#c8482a" d="M7 8h12v9H7z" /><path fill="none" stroke="#fff" strokeWidth="1.500" d="M12 10.500a2.300 2.300 0 1 0 2 3.500M15 11h2.500M15 13.500h2.500" /></svg>) },
  { name: "Gravador", icon: (
    <svg width="24" height="24" viewBox="0 0 24 24"><rect width="24" height="24" rx="2" fill="#ea5545" /><path fill="#fff" d="M6 4h13v3.500h-9v9h9V20H6z" opacity=".92" /></svg>) },
];

export default function App() {
  return (
    <Shell>
      <GlobalStyle />
      <Window>
        <TitleBar>
          <QuickAccess>
            <button aria-label="Salvar"><Icon w={18} stroke="#d8d7d5"><path d="M2 2h14v14H3.500L2 14.500zM5 2v5h8V2M5 16v-5h7v5M7.500 13.500V16" /></Icon></button>
            <button aria-label="Desfazer"><Icon w={18} stroke="#d8d7d5"><path d="M2.500 2v6h6M2.500 8C5 3 10 2 12.500 5c3 4-1 8-5 11.500" /></Icon></button>
            <button aria-label="Refazer"><Icon w={18} stroke="#6b6a67"><path d="M15.500 2v6h-6M15.500 8C13 3 8 2 5.500 5c-3 4 1 8 5 11.500" /></Icon></button>
          </QuickAccess>
          <WindowTitle>vacinacao_pr_covid19 - Power BI Desktop</WindowTitle>
          <Account>
            <AccountButton>
              Julio Cesar Pedroso
              <Icon w={20} stroke="#3a3936" sw={1.5}><circle cx="10" cy="10" r="10" fill="#fff" stroke="none" /><circle cx="10" cy="6" r="3" /><path d="M4.500 11.500h11c0 6-11 6-11 0z" /></Icon>
            </AccountButton>
            <WindowButton aria-label="Minimizar"><Icon w={12} stroke="#fff"><path d="M1 7h10" /></Icon></WindowButton>
            <WindowButton aria-label="Restaurar"><Icon w={12} stroke="#fff"><path d="M1 3.500h7.500V11H1zM3.500 3.500v-2.500H11v7.500H8.500" /></Icon></WindowButton>
            <WindowButton aria-label="Fechar"><Icon w={12} stroke="#fff"><path d="m1 1 10 10M11 1 1 11" /></Icon></WindowButton>
          </Account>
        </TitleBar>
        <MenuTabs>
          {menu.map((m, i) => <MenuTab key={m} $active={i === 1}>{m}</MenuTab>)}
        </MenuTabs>
        <Ribbon>
          <RibbonGroup $w={100}>
            <Tool disabled aria-label="Colar">{ribbon.paste}<Chevron /></Tool>
            <Tool disabled aria-label="Pincel">{ribbon.brush}</Tool>
          </RibbonGroup>
          <RibbonGroup $w={398} $end={8}>
            <Tool $label>{ribbon.db}Obter dados<Chevron /></Tool>
            <Tool aria-label="Excel">{ribbon.excel}</Tool>
            <Tool aria-label="Hub de dados">{ribbon.dataset}<Chevron /></Tool>
            <Tool aria-label="SQL Server">{ribbon.sql}</Tool>
            <Tool aria-label="Inserir dados">{ribbon.enter}</Tool>
            <Tool aria-label="Dataverse">{ribbon.verse}</Tool>
            <Tool aria-label="Fontes recentes">{ribbon.recent}<Chevron /></Tool>
          </RibbonGroup>
          <RibbonGroup $w={162}>
            <Tool aria-label="Transformar dados">{ribbon.transform}<Chevron /></Tool>
            <Tool $label>{ribbon.refresh}Atualizar</Tool>
          </RibbonGroup>
          <RibbonGroup $w={219} $end={8}>
            <Tool $label>{ribbon.visual}Novo visual</Tool>
            <Tool aria-label="Caixa de texto">{ribbon.textbox}</Tool>
            <Tool aria-label="Mais visuais">{ribbon.edit}<Chevron /></Tool>
          </RibbonGroup>
          <RibbonGroup $w={87}>
            <Tool aria-label="Nova medida">{ribbon.calc}</Tool>
            <Tool aria-label="Medida rápida">{ribbon.quick}</Tool>
          </RibbonGroup>
          <RibbonGroup $w={180} $end={8}>
            <Tool disabled $label>{ribbon.sens}Confidencialidade<Chevron /></Tool>
          </RibbonGroup>
          <RibbonGroup $w={108}>
            <Tool $label>{ribbon.publish}Publicar</Tool>
          </RibbonGroup>
          <Expand aria-label="Expandir"><Chevron sw={1.8} /></Expand>
        </Ribbon>

        <Workspace>
          <ReportSide>
            <ReportRow>
              <Rail>
                <RailButton $active aria-label="Relatório"><Icon w={16}><path d="M1 1v13.500h14.500V3M4 14V7h2.500v7M8 14V9h2.500v5M12 14V4h2.500" /></Icon></RailButton>
                <RailButton aria-label="Dados"><Icon w={17} stroke="#6b6967"><path d="M1 1h15v15H1zM1 4h15M1 8h15M1 12h15M6 4v12M11 4v12" /></Icon></RailButton>
                <RailButton aria-label="Modelo"><Icon w={19} stroke="#6b6967"><path d="M1 7h7v7H1zM1 9h7M10.500 1H18v6h-7.500zM10.500 3H18M10.500 12H18v6h-7.500zM10.500 14H18M4.500 7V3.500h6M4.500 14v2.500h6" /></Icon></RailButton>
              </Rail>
              <Report>
                <ReportHeader>
                  <FlagCell>
                    <Flag />
                    <BackButton aria-label="Voltar"><Icon stroke="#4a4846" sw={1.6}><circle cx="10" cy="10" r="9" fill="#fff" /><path d="M15 10H5.500M9.500 5.500 5 10l4.500 4.500" /></Icon></BackButton>
                  </FlagCell>
                  <ReportTitle>VACINAÇÃO COVID 19 NO PARANÁ.</ReportTitle>
                </ReportHeader>
                <ReportMiddle>
                  <Slicers>
                    <Slicer>
                      <SlicerLabel htmlFor="dose">Descrição da Vacina</SlicerLabel>
                      <SlicerBox $bg="#a0d1fb" $gap={11}>
                        <SlicerSelect id="dose"><option>1ª Dose</option></SlicerSelect><Chevron sw={0.9} />
                      </SlicerBox>
                    </Slicer>
                    <Slicer>
                      <SlicerLabel htmlFor="grupo">Descrição da Vacina</SlicerLabel>
                      <SlicerBox $bg="#d7434f" $gap={3}>
                        <SlicerSelect id="grupo" $color="#5e1820"><option>Agente Comunitário de..</option></SlicerSelect>
                        <Chevron up sw={0.9} color="#7a222c" />
                        <SlicerMenu>
                          {options.map((o, i) => (
                            <SlicerOption key={o} $on={i === 2}><SlicerCheck type="checkbox" defaultChecked={i === 2} />{o}</SlicerOption>
                          ))}
                        </SlicerMenu>
                        <Pointer>
                          <svg width="16" height="22" viewBox="0 0 16 22"><path fill="#fff" stroke="#222" d="M4.500 13V2.500c0-2 2.500-2 2.500 0V8c.5-1 2.300-.8 2.400.4.600-.8 2.200-.5 2.300.6 1-.6 2.300 0 2.300 1.200V15c0 4-2 6-5.500 6C5 21 4 18 1 14.500c-1-1.500 1-2.800 2.200-1.500z" /></svg>
                        </Pointer>
                      </SlicerBox>
                    </Slicer>
                    <Slicer>
                      <SlicerLabel htmlFor="todos">Descrição da Vacina</SlicerLabel>
                      <SlicerBox $bg="#f3ee33" $gap={6}>
                        <SlicerSelect id="todos"><option>Todos</option></SlicerSelect><Chevron sw={0.9} />
                      </SlicerBox>
                    </Slicer>
                  </Slicers>
                  <ColumnChart>
                    <ChartTitle $line={20} $color="#c4434e" $shift={106}>Vacinação Covid 19 no Estado do Paraná</ChartTitle>
                    <Columns>
                      <ClippedColumn />
                      {months.map(([name, v]) => (
                        <ColumnCell key={name}>
                          <ColumnValue>{v}</ColumnValue>
                          <Column style={{ height: v * 4.2 }} />
                          {name}
                        </ColumnCell>
                      ))}
                    </Columns>
                    <AxisName $bold $shift={78}>Mês</AxisName>
                  </ColumnChart>
                </ReportMiddle>
                <BottomChart>
                  <ChartTitle $line={18} $color="#252423">Contagem de Vacina por Nome</ChartTitle>
                  <Plot>
                    <YName>Contagem de vacina_codigo</YName>
                    <YTicks>{[80, 60, 40, 20, 0].map((t) => <span key={t}>{t}</span>)}</YTicks>
                    <PlotBody>
                      <PlotArea><BigBar><BarValue>73</BarValue></BigBar></PlotArea>
                      <CategoryName>Agente Comunitário de Saúde - ACS</CategoryName>
                      <AxisName>vacina_grupoAtendimento_nome</AxisName>
                    </PlotBody>
                  </Plot>
                </BottomChart>
              </Report>
            </ReportRow>
            <PageTabs>
              <PageArrows>
                <Icon w={6} h={8} stroke="none"><path fill="#c2c0bd" d="M5 0v8L0 4z" /></Icon>
                <Icon w={6} h={8} stroke="none"><path fill="#c2c0bd" d="M1 0v8l5-4z" /></Icon>
              </PageArrows>
              <PageTab>vacinacao_covid19-PR</PageTab>
              <AddPage aria-label="Nova página"><Icon w={12} stroke="#fff" sw={3}><path d="M6 1v10M1 6h10" /></Icon></AddPage>
            </PageTabs>
          </ReportSide>

          <FiltersPane>
            <Double left />
            <Icon w={12} h={14}><path d="M11 1.500v11L7 9H1V5h6z" /></Icon>
            <FiltersTitle>Filtros</FiltersTitle>
          </FiltersPane>

          <VizPane>
            <PaneHeader $pad={7}><h2>Visualizações</h2><Double /></PaneHeader>
            <BuildLabel>Criar visual</BuildLabel>
            <ModeButtons>
              <ModeButton $active aria-label="Criar visual"><Icon w={26} h={26}><path d="M2 2h18" /><path fill="#117865" strokeDasharray="2 1" d="M2 7h22v7H2zM2 18h22v7H2z" /></Icon></ModeButton>
              <ModeButton aria-label="Formatar"><Icon w={26} h={26}><path d="M6 24.500H2V1.500h11l5.500 5.500v4M12.500 2v5.500H18" /><path fill="#fff" d="m25 9-9.500 8.500 2 2zM15.500 17.500c-3-.5-4.500 1-4.500 3-.5 2-1.500 3-3 3.500 5 1 8.500 0 9.500-4.500z" /></Icon></ModeButton>
            </ModeButtons>
            <Notch viewBox="0 0 181 16" fill="none" stroke="#a5a4a1"><path d="M0 13.500h16l8-8 8 8h149" /></Notch>
            <VizGrid>
              {viz.map((v, i) => (
                <VizButton key={i} aria-label={`Visual ${i + 1}`}>
                  {v ? <Icon sw={1.2}>{v}</Icon> : <VizText $size={scripts[i][1]}>{scripts[i][0]}</VizText>}
                </VizButton>
              ))}
              <VizButton aria-label="Mais visuais"><Icon stroke="none"><g fill={ink}><circle cx="4" cy="9" r="1" /><circle cx="10" cy="9" r="1" /><circle cx="16" cy="9" r="1" /></g></Icon></VizButton>
            </VizGrid>
            <Wells>
              <WellName>Valores</WellName>
              <DropField>Adicionar os campos de da...</DropField>
              <WellName $bold>Drill-through</WellName>
              <ToggleRow>Relatório cruzado<Toggle type="checkbox" /></ToggleRow>
              <ToggleRow>Manter todos os filtros<Toggle type="checkbox" defaultChecked /></ToggleRow>
              <FilterCard>
                <CardHead>
                  <span>vacina_categoria_no</span>
                  <Chevron up />
                  <Icon w={9}><path d="m.5.5 8 8M8.500.5l-8 8" /></Icon>
                  <Icon w={11} h={12}><path d="M1 5.500h9v6H1zM3 5.500V3c0-3 5-3 5 0M4.500 8.500h2" /></Icon>
                </CardHead>
                <div>é (Tudo)</div>
                <div>Permitir o drill-through qu...</div>
                <CardSelect><select aria-label="Uso do campo"><option>Usado como categoria</option></select><Chevron sw={1.8} /></CardSelect>
              </FilterCard>
            </Wells>
          </VizPane>

          <DataPane>
            <PaneHeader $pad={6}><h2>Dados</h2><Double /></PaneHeader>
            <SearchBox><Magnifier w={14} color={ink} /><input placeholder="Pesquisar" aria-label="Pesquisar dados" /></SearchBox>
            <FieldList>
              {fields.map(([name, kind], i) => (
                <Field key={i}>
                  {kind === "date" ? <Icon w={8} h={12}><path d="m1 1 5.500 5L1 11" /></Icon> : <i />}
                  <FieldCheck type="checkbox" />
                  {kind === "sum" ? <Sigma /> : kind === "date" ? <Calendar /> : <i />}
                  <span>{name}</span>
                </Field>
              ))}
            </FieldList>
          </DataPane>
        </Workspace>

        <StatusBar>
          Página 1 de 1
          <Zoom>
            -<ZoomRange type="range" min="10" max="200" defaultValue="66" aria-label="Zoom" />+<b>66%</b>
            <Icon w={16} h={12} stroke="#605e5c"><path d="M.7.7h14.600v10.600H.7z" /><path d="M3 5V3h2M11 3h2v2M13 7v2h-2M5 9H3V7" /></Icon>
          </Zoom>
        </StatusBar>
      </Window>

      <Taskbar>
        <StartButton aria-label="Iniciar"><svg width="16" height="16" viewBox="0 0 16 16" fill="#fff"><path d="M0 2.300 7 1.300v6.200H0zM8 1.200 16 0v7.500H8zM0 8.500h7v6.200l-7-1zM8 8.500h8V16l-8-1.200z" /></svg></StartButton>
        <TaskSearch><Magnifier w={18} color="#222" /><input placeholder="Pesquisar" aria-label="Pesquisar no Windows" /><City /></TaskSearch>
        <TaskApps>
          {apps.map((a) => <TaskApp key={a.name} aria-label={a.name} $idle={a.idle} $active={a.active}>{a.icon}</TaskApp>)}
        </TaskApps>
        <Tray>
          <Weather>
            <svg width="26" height="24" viewBox="0 0 26 24"><circle cx="12" cy="12" r="9" fill="#f59a2f" /><path fill="#b9d3ee" d="M1 9c-2-4 2-6 4-5 2-4 7-3 7 1 2 1 1 4-1 4zM11 22c-3-3 0-6 3-5 1-4 7-4 7 0 4 0 4 5 1 5z" /><circle cx="22" cy="3.500" r="3" fill="#d5382f" /></svg>
            <span>17°C</span><span>Parc ensolarado</span>
          </Weather>
          <HiddenIcons aria-label="Ícones ocultos"><Chevron up w={12} color="#fff" /></HiddenIcons>
          <Icon w={18} h={16} stroke="#e8e8e8"><path d="M5 3.500h12v8H5zM9 14.500h6M12 11.500v3M1 1.500h5v4H1zM3.500 5.500v9H7" /></Icon>
          <Icon w={18} h={16} stroke="#e8e8e8"><path d="M1 5.500h3l4-4v13l-4-4H1zM10.500 5.500c1.500 1.500 1.500 3.500 0 5M13 3.500c2.500 2.500 2.500 6.500 0 9M15.500 2c3 3.500 3 8.500 0 12" /></Icon>
          <svg width="20" height="18" viewBox="0 0 20 18"><path fill="#fff" d="m7 0 3 2-3 2-3-2zM14 0l3 2-3 2-3-2zM14 5l3 2-3 2-3-2z" /><circle cx="7" cy="11" r="5.500" fill="#d0142c" /><path stroke="#fff" fill="none" d="m6 9.500 1.500-1V14" /></svg>
          <Clock>17:05<br />21/04/2023</Clock>
          <Icon w={18} h={18} stroke="#e8e8e8"><path d="M1 2h16v11h-5l-3 3-1-3H1z" /></Icon>
          <Peek />
        </Tray>
      </Taskbar>

      <Watermark>
        <svg width="143" height="143" viewBox="0 0 143 143" fill="#fff" aria-hidden="true">
          <path d="M52 32c14-2 31-1 36 12-4-4-9-5-14-5-8 0-16-2-22-7z" />
          <path d="M33 70c-1-14 9-23 22-21-9 3-17 9-22 21z" />
          <path d="M56 47c8-5 20-5 28 1 10 3 17 9 22 20 2 5 1 9-2 12-5-1-9 1-13-1-8 1-11-5-19-5-3 0-5-2-5-5 0-6-3-9-8-11 5-3 12-3 17-6-7-3-14-2-20-5z" />
          <path d="M61 59c-11 7-15 15-12 25 4 8 6 15 3 23 9-8 10-16 7-26-2-8 0-15 5-21z" />
          <path d="M66 66c-4 11 0 20 6 29 2 7 0 13-5 20 13-5 18-11 16-20-7-7-15-16-17-29z" />
          <path d="M82 84c8 3 15 2 22-2 1 10-3 17-16 22 4-7 0-14-6-20z" />
          <path fill="none" stroke="#69bdf8" strokeWidth="1.500" d="M83 57c4 1 7 2 10 5M94 75c4 1 7 0 10-2" />
        </svg>
      </Watermark>
    </Shell>
  );
}
